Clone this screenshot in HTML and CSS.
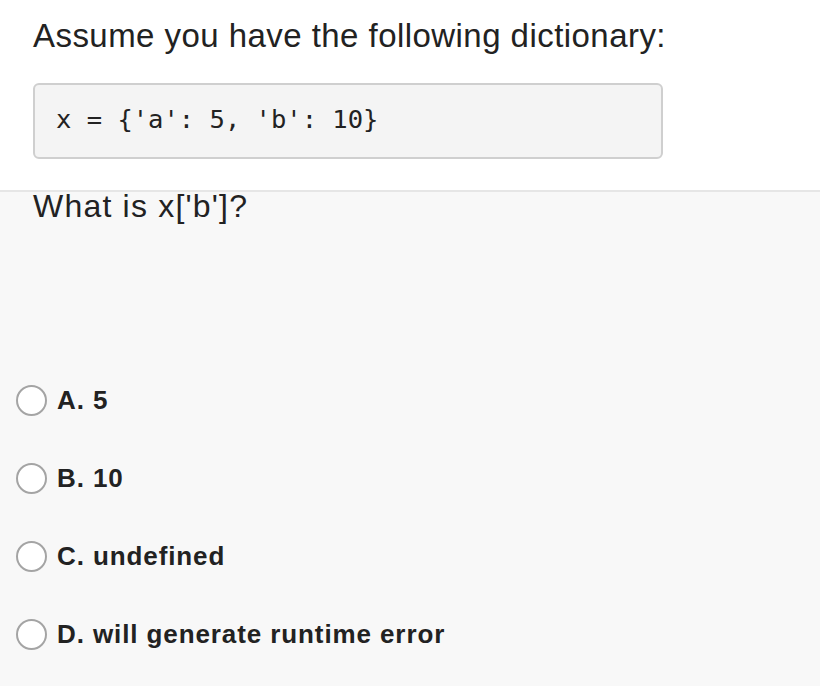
FILE: index.html
```html
<!DOCTYPE html>
<html>
<head>
<meta charset="utf-8">
<link rel="stylesheet" href="styles.css">
</head>
<body>
<div class="top">
  <h1 class="prompt">Assume you have the following dictionary:</h1>
  <pre class="code">x = {'a': 5, 'b': 10}</pre>
</div>
<div class="bottom">
  <p class="question">What is x['b']?</p>
  <ul class="options">
    <li class="option"><span class="radio"></span><span class="label">A. 5</span></li>
    <li class="option"><span class="radio"></span><span class="label">B. 10</span></li>
    <li class="option"><span class="radio"></span><span class="label">C. undefined</span></li>
    <li class="option"><span class="radio"></span><span class="label">D. will generate runtime error</span></li>
  </ul>
</div>
</body>
</html>
```
FILE: styles.css
```css
html, body {
  margin: 0;
  padding: 0;
  height: 100%;
}
body {
  font-family: "Liberation Sans", Arial, sans-serif;
  color: #222;
  background: #f8f8f8;
  display: flex;
  flex-direction: column;
}
.top {
  background: #fff;
  padding: 18px 0 0 33px;
  height: 172px;
}
.prompt {
  margin: 0;
  font-size: 33px;
  font-weight: normal;
  line-height: 36px;
  letter-spacing: 0.45px;
}
.code {
  margin: 29px 0 0 0;
  width: 630px;
  box-sizing: border-box;
  border: 2px solid #cfcfcf;
  border-radius: 6px;
  background: #f4f4f4;
  padding: 19px 21px 23px 21px;
  font-family: "DejaVu Sans Mono", monospace;
  font-size: 25.5px;
  line-height: 30px;
  color: #222;
}
.bottom {
  flex: 1;
  border-top: 2px solid #e6e6e6;
  background: #f8f8f8;
}
.question {
  margin: 1px 0 0 0;
  padding-left: 33px;
  font-size: 32px;
  line-height: 26px;
  letter-spacing: 1.2px;
}
.options {
  list-style: none;
  margin: 0;
  padding: 142px 0 0 16px;
}
.option {
  display: flex;
  align-items: center;
  height: 78px;
}
.radio {
  width: 31px;
  height: 31px;
  box-sizing: border-box;
  border: 2px solid #a4a4a4;
  border-radius: 50%;
  background: #fff;
  flex: none;
}
.label {
  margin-left: 10px;
  font-weight: bold;
  font-size: 26px;
  line-height: 30px;
  letter-spacing: 0.9px;
}
```
